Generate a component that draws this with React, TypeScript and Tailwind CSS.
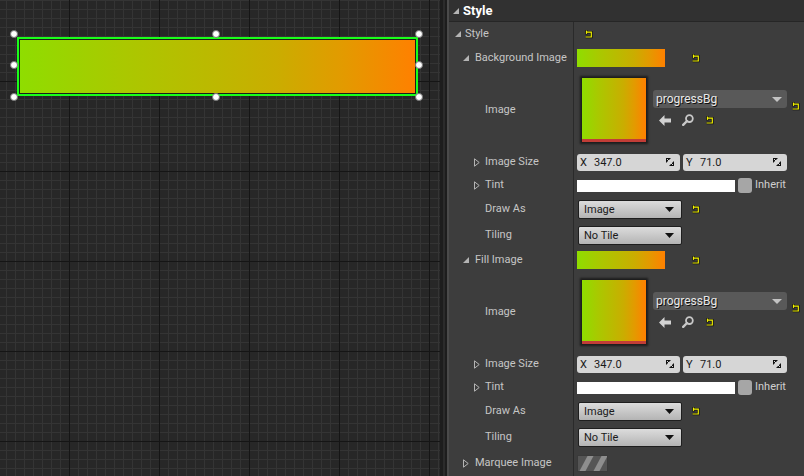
import React from "react";

const GRADIENT =
  "bg-[linear-gradient(to_right,#8fdd00_0%,#a9c900_25%,#bdb800_50%,#caad00_65%,#e39a00_82%,#ff8000_100%)]";

type Level = 0 | 1 | 2;
type Arrow = "open" | "closed" | "none";

const LEVELS: Record<Level, { pad: string; box: string }> = {
  0: { pad: "pl-[6px]", box: "w-[10px]" },
  1: { pad: "pl-[14px]", box: "w-[12px]" },
  2: { pad: "pl-[25px]", box: "w-[11px]" },
};

function OpenArrow() {
  return (
    <svg width="6" height="6" viewBox="0 0 6 6">
      <path d="M6 0V6H0Z" fill="#b4b4b4" />
    </svg>
  );
}

function ClosedArrow() {
  return (
    <svg width="6" height="9" viewBox="0 0 6 9">
      <path d="M0.5 0.8L5.2 4.5L0.5 8.2Z" fill="none" stroke="#b4b4b4" strokeWidth="1" />
    </svg>
  );
}

// little yellow "reset to default" hook
function ResetIcon() {
  return (
    <svg width="9" height="9" viewBox="0 0 9 9" className="shrink-0">
      <path d="M2.5 2.2H7.3V7H1.6" fill="none" stroke="#111" strokeWidth="2.6" />
      <path d="M2.5 0.2V4.4" fill="none" stroke="#111" strokeWidth="2.6" />
      <path d="M2.5 2.2H7.3V7H1.6" fill="none" stroke="#f2f200" strokeWidth="1.2" />
      <path d="M2.5 0.6V3.9" fill="none" stroke="#f2f200" strokeWidth="1.2" />
    </svg>
  );
}

function Row({
  label,
  level,
  arrow = "none",
  height,
  children,
  valueClass = "items-center",
}: {
  label: string;
  level: Level;
  arrow?: Arrow;
  height: string;
  children?: React.ReactNode;
  valueClass?: string;
}) {
  const lv = LEVELS[level];
  return (
    <div className={`flex ${height}`}>
      <div className={`flex w-[124px] shrink-0 items-center ${lv.pad}`}>
        <span className={`flex shrink-0 items-center ${lv.box}`}>
          {arrow === "open" && <OpenArrow />}
          {arrow === "closed" && <ClosedArrow />}
        </span>
        <span className="whitespace-nowrap text-[11px] text-[#c6c6c6]">{label}</span>
      </div>
      <div className="w-px shrink-0 bg-[#2a2a2a]" />
      <div className={`flex flex-1 ${valueClass}`}>{children}</div>
    </div>
  );
}

function Swatch() {
  return <div className={`ml-[3px] h-[18px] w-[88px] ${GRADIENT}`} />;
}

function Combo({ text }: { text: string }) {
  return (
    <div className="ml-[4px] flex h-[19px] w-[104px] items-center justify-between rounded-[2px] border border-[#1e1e1e] bg-[linear-gradient(to_bottom,#dcdcdc,#b4b4b4)] pl-[5px] pr-[7px]">
      <span className="text-[11px] leading-none text-[#1a1a1a]">{text}</span>
      <svg width="9" height="5" viewBox="0 0 9 5">
        <path d="M0 0H9L4.5 5Z" fill="#111" />
      </svg>
    </div>
  );
}

function SpinIcon() {
  return (
    <svg width="8" height="8" viewBox="0 0 8 8">
      <path d="M0 0H5L0 5Z" fill="#111" />
      <path d="M8 8H3L8 3Z" fill="#111" />
      <path d="M1 1L7 7" stroke="#d6d6d6" strokeWidth="1" />
    </svg>
  );
}

function NumBox({ axis, value, w }: { axis: string; value: string; w: string }) {
  return (
    <div className={`flex h-[17px] items-center rounded-[3px] bg-[#d6d6d6] pl-[3px] pr-[6px] ${w}`}>
      <span className="w-[14px] text-[11px] leading-none text-[#1a1a1a]">{axis}</span>
      <span className="flex-1 text-[11px] leading-none text-[#1a1a1a]">{value}</span>
      <SpinIcon />
    </div>
  );
}

function ImageValue() {
  return (
    <>
      <div className="ml-[8px] mt-[8px] flex h-[64px] w-[64px] flex-col shadow-[0_0_2px_2px_rgba(0,0,0,0.55)]">
        <div className={`flex-1 ${GRADIENT}`} />
        <div className="h-[3px] bg-[#c23d37]" />
      </div>
      <div className="ml-[7px] mt-[20px] flex flex-col">
        <div className="flex items-end">
          <div className="flex h-[18px] w-[134px] items-center justify-between rounded-[3px] bg-[#595959] pl-[3px] pr-[5px]">
            <span className="text-[12px] leading-none text-[#e8e8e8] [text-shadow:1px_1px_0_#111]">
              progressBg
            </span>
            <svg width="10" height="5" viewBox="0 0 10 5">
              <path d="M0 0H10L5 5Z" fill="#c4c4c4" />
            </svg>
          </div>
          <span className="ml-[4px] -mb-[3px]">
            <ResetIcon />
          </span>
        </div>
        <div className="mt-[6px] flex items-center pl-[6px]">
          <svg width="12" height="11" viewBox="0 0 12 11">
            <path d="M0 5.5L5.5 0V3.5H12V7.5H5.5V11Z" fill="#d2d2d2" />
          </svg>
          <svg width="12" height="12" viewBox="0 0 12 12" className="ml-[11px]">
            <circle cx="7.4" cy="4.6" r="3.4" fill="none" stroke="#c8c8c8" strokeWidth="1.8" />
            <path d="M5 7L1.2 10.8" stroke="#c8c8c8" strokeWidth="2.4" strokeLinecap="round" />
          </svg>
          <span className="ml-[11px]">
            <ResetIcon />
          </span>
        </div>
      </div>
    </>
  );
}

function ImageGroup({ label }: { label: string }) {
  return (
    <>
      <Row label={label} level={1} arrow="open" height="h-[24px]">
        <Swatch />
        <span className="ml-[26px]">
          <ResetIcon />
        </span>
      </Row>
      <Row label="Image" level={2} height="h-[80px]" valueClass="items-start">
        <ImageValue />
      </Row>
      <Row label="Image Size" level={2} arrow="closed" height="h-[24px]">
        <div className="ml-[3px] flex gap-[3px]">
          <NumBox axis="X" value="347.0" w="w-[103px]" />
          <NumBox axis="Y" value="71.0" w="w-[104px]" />
        </div>
      </Row>
      <Row label="Tint" level={2} arrow="closed" height="h-[23px]">
        <div className="ml-[3px] h-[12px] w-[158px] bg-white" />
        <div className="ml-[3px] h-[15px] w-[14px] rounded-[3px] bg-[#a6a6a6]" />
        <span className="ml-[3px] text-[11px] text-[#cfcfcf]">Inherit</span>
      </Row>
      <Row label="Draw As" level={2} height="h-[25px]">
        <Combo text="Image" />
        <span className="ml-[9px]">
          <ResetIcon />
        </span>
      </Row>
      <Row label="Tiling" level={2} height="h-[26px]">
        <Combo text="No Tile" />
      </Row>
    </>
  );
}

export default function App() {
  const handles = [
    "left-[10px] top-[30px]",
    "left-[212px] top-[30px]",
    "left-[415px] top-[30px]",
    "left-[10px] top-[61px]",
    "left-[415px] top-[61px]",
    "left-[10px] top-[93px]",
    "left-[212px] top-[93px]",
    "left-[415px] top-[93px]",
  ];

  return (
    <div className="flex h-[476px] w-[804px] overflow-hidden bg-[#3d3d3d] font-['Roboto',sans-serif]">
      {/* Designer canvas */}
      <div className="relative h-full w-[440px] shrink-0 bg-[#272727] bg-[image:linear-gradient(to_right,#151515_1px,transparent_1px),linear-gradient(to_bottom,#151515_1px,transparent_1px),linear-gradient(to_right,#343434_1px,transparent_1px),linear-gradient(to_bottom,#343434_1px,transparent_1px)] bg-[size:90px_90px,90px_90px,9px_9px,9px_9px] bg-[position:69px_81px,69px_81px,6px_0px,6px_0px]">
        <div className="absolute left-[17px] top-[37px] h-[59px] w-[401px] border-2 border-[#1aff1a]">
          <div className={`h-full w-full border border-[#1c1c1c] ${GRADIENT}`} />
        </div>
        {handles.map((pos) => (
          <div
            key={pos}
            className={`absolute h-[8px] w-[8px] rounded-full border border-[#777] bg-white ${pos}`}
          />
        ))}
      </div>

      {/* Splitter */}
      <div className="flex w-[7px] shrink-0 bg-[#1d1d1d]">
        <div className="ml-[3px] w-[2px] bg-[#2b2b2b]" />
      </div>

      {/* Details panel */}
      <div className="flex flex-1 flex-col border-l-2 border-[#4a4a4a]">
        <div className="flex h-[22px] shrink-0 items-center border-b border-[#262626] bg-[#313131] pl-[4px]">
          <span className="flex w-[10px] items-center">
            <OpenArrow />
          </span>
          <span className="text-[13px] font-bold text-white">Style</span>
        </div>
        <Row label="Style" level={0} arrow="open" height="h-[24px]">
          <span className="ml-[10px]">
            <ResetIcon />
          </span>
        </Row>
        <ImageGroup label="Background Image" />
        <ImageGroup label="Fill Image" />
        <Row label="Marquee Image" level={1} arrow="closed" height="h-[26px]">
          <svg width="31" height="17" viewBox="0 0 31 17" className="ml-[3px]">
            <rect width="31" height="17" fill="#555" />
            <path d="M2 17L11 0H17L8 17Z" fill="#8e8e8e" />
            <path d="M16 17L25 0H31L22 17Z" fill="#8e8e8e" />
            <rect x="0.5" y="0.5" width="30" height="16" fill="none" stroke="#3a3a3a" strokeWidth="1" />
          </svg>
        </Row>
      </div>
    </div>
  );
}
